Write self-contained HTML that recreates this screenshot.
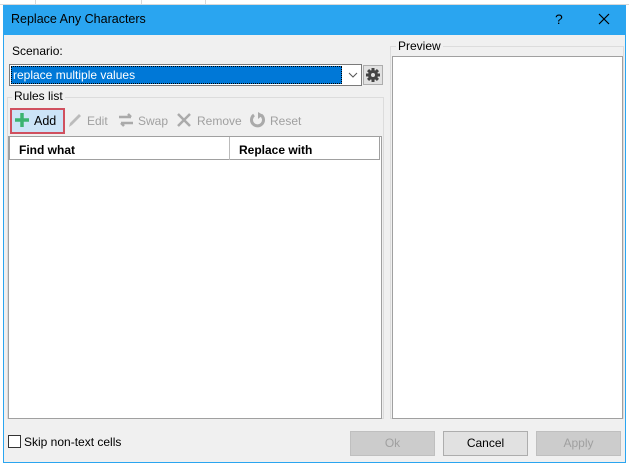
<!DOCTYPE html><html><head><style>
*{margin:0;padding:0;box-sizing:border-box}
body{width:629px;height:465px;position:relative;background:#fff;font-family:"Liberation Sans",sans-serif;font-size:12px;color:#000;overflow:hidden}
.a{position:absolute}
.g{color:#a0a0a0}
</style></head><body>
<div class="a" style="left:0;top:0;width:629px;height:5px;background:#fff;border-bottom:1px solid #d8d8d8"></div>
<div class="a" style="left:35px;top:0;width:1px;height:5px;background:#d8d8d8"></div>
<div class="a" style="left:141px;top:0;width:1px;height:5px;background:#d8d8d8"></div>
<div class="a" style="left:205px;top:0;width:1px;height:5px;background:#d8d8d8"></div>
<div class="a" style="left:3px;top:5px;width:623px;height:458px;background:#f0f0f0;border:1px solid #2aa5f0"></div>
<div class="a" style="left:3px;top:5px;width:623px;height:30px;background:#2aa5f0"></div>
<div class="a" style="left:11px;top:12px;font-size:12.5px">Replace Any Characters</div>
<div class="a" style="left:555px;top:11px;font-size:14px">?</div>
<svg class="a" style="left:598px;top:13px" width="12" height="12"><path d="M1 1L11 11M11 1L1 11" stroke="#000" stroke-width="1.2"/></svg>
<div class="a" style="left:12px;top:44px">Scenario:</div>
<div class="a" style="left:9px;top:64px;width:353px;height:22px;background:#fff;border:1px solid #7a7a7a"></div>
<div class="a" style="left:11px;top:66px;width:331px;height:18px;background:#0078d7;border:1px dotted #000;color:#fff;padding-left:1px;line-height:16px">replace multiple values</div>
<svg class="a" style="left:348px;top:72px" width="10" height="6"><path d="M1 1L5 5L9 1" stroke="#555" fill="none"/></svg>
<div class="a" style="left:363px;top:65px;width:20px;height:20px;background:#e1e1e1;border:1px solid #adadad"></div>
<svg class="a" style="left:365px;top:67px" width="16" height="16" viewBox="0 0 16 16"><g fill="#444"><circle cx="8" cy="8" r="5"/><rect x="6.5" y="1" width="3" height="14"/><rect x="1" y="6.5" width="14" height="3"/><rect x="6.5" y="1" width="3" height="14" transform="rotate(45 8 8)"/><rect x="6.5" y="1" width="3" height="14" transform="rotate(-45 8 8)"/></g><circle cx="8" cy="8" r="2" fill="#e1e1e1"/></svg>
<div class="a" style="left:7px;top:97px;width:377px;height:322px;border:1px solid #dcdcdc"></div>
<div class="a" style="left:12px;top:89px;background:#f0f0f0;padding:0 2px">Rules list</div>
<div class="a" style="left:10px;top:108px;width:55px;height:26px;border:2px solid #d0505f;background:#cce4f7"></div>
<svg class="a" style="left:14px;top:112px" width="16" height="16"><path d="M8 1V15M1 8H15" stroke="#3cb371" stroke-width="3.5"/></svg>
<div class="a" style="left:34px;top:114px;font-size:12.5px">Add</div>
<svg class="a" style="left:67px;top:112px" width="16" height="16"><path d="M2 15L3 11L12 2L14 4L5 13Z" fill="#bbb"/></svg>
<div class="a g" style="left:87px;top:114px">Edit</div>
<svg class="a" style="left:117px;top:112px" width="18" height="16"><path d="M2 5H14M11 2L14 5M16 11H4M7 14L4 11" stroke="#aaa" stroke-width="2.5" fill="none"/></svg>
<div class="a g" style="left:138px;top:114px">Swap</div>
<svg class="a" style="left:176px;top:112px" width="16" height="16"><path d="M2 2L14 14M14 2L2 14" stroke="#aaa" stroke-width="2.5"/></svg>
<div class="a g" style="left:197px;top:114px">Remove</div>
<svg class="a" style="left:249px;top:111px" width="17" height="18"><path d="M5 4A6 6 0 1 0 12 4" stroke="#aaa" stroke-width="3" fill="none"/><path d="M9 1V8L14 4Z" fill="#aaa"/></svg>
<div class="a g" style="left:270px;top:114px">Reset</div>
<div class="a" style="left:8px;top:136px;width:374px;height:283px;background:#fff;border:1px solid #a0a0a0"></div>
<div class="a" style="left:9px;top:137px;width:371px;height:23px;border:1px solid #a0a0a0;border-top:none;background:#fff"></div>
<div class="a" style="left:229px;top:137px;width:1px;height:23px;background:#bbb"></div>
<div class="a" style="left:19px;top:143px;font-weight:bold">Find what</div>
<div class="a" style="left:239px;top:143px;font-weight:bold">Replace with</div>
<div class="a" style="left:390px;top:46px;width:234px;height:373px;border:1px solid #dcdcdc"></div>
<div class="a" style="left:396px;top:39px;background:#f0f0f0;padding:0 2px">Preview</div>
<div class="a" style="left:392px;top:56px;width:231px;height:363px;background:#fff;border:1px solid #a0a0a0"></div>
<div class="a" style="left:8px;top:435px;width:13px;height:13px;background:#fff;border:1px solid #333"></div>
<div class="a" style="left:24px;top:435px">Skip non-text cells</div>
<div class="a g" style="left:350px;top:431px;width:85px;height:25px;background:#ccc;border:1px solid #bfbfbf;text-align:center;line-height:23px">Ok</div>
<div class="a" style="left:443px;top:431px;width:85px;height:25px;background:#e1e1e1;border:1px solid #adadad;text-align:center;line-height:23px">Cancel</div>
<div class="a g" style="left:536px;top:431px;width:85px;height:25px;background:#ccc;border:1px solid #bfbfbf;text-align:center;line-height:23px">Apply</div>
</body></html>
